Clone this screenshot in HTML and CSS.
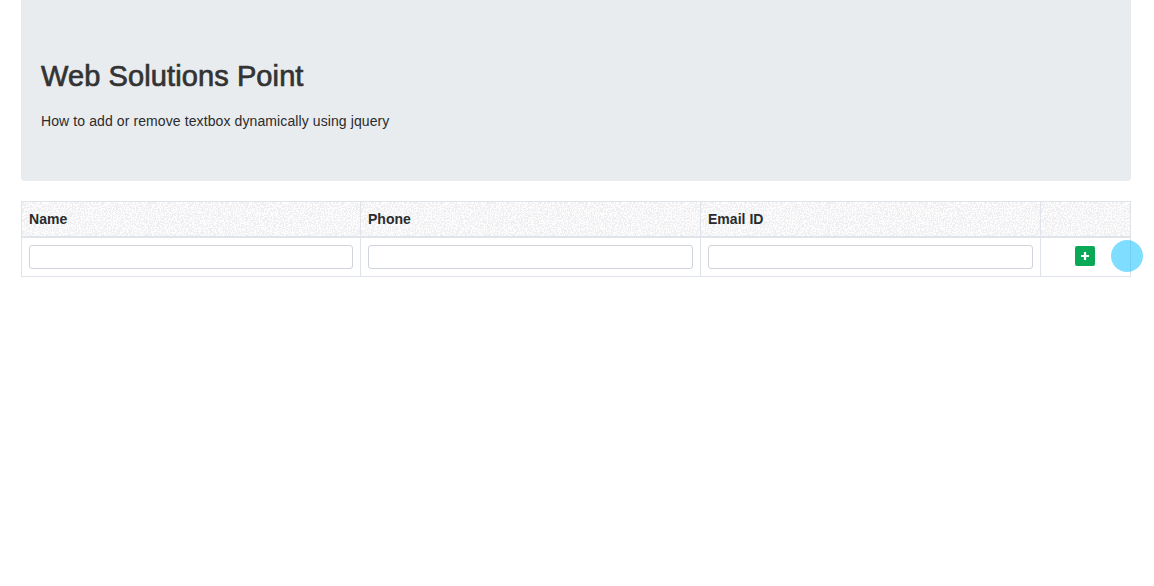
FILE: index.html
```html
<!DOCTYPE html>
<html lang="en">
<head>
<meta charset="utf-8">
<title>Web Solutions Point</title>
<link rel="stylesheet" href="styles.css">
</head>
<body>
<div class="container">
  <header class="jumbotron">
    <h1>Web Solutions Point</h1>
    <p>How to add or remove textbox dynamically using jquery</p>
  </header>
  <table class="grid">
    <colgroup>
      <col class="c1"><col class="c2"><col class="c3"><col class="c4">
    </colgroup>
    <thead>
      <tr><th>Name</th><th>Phone</th><th>Email ID</th><th></th></tr>
    </thead>
    <tbody>
      <tr>
        <td><input type="text" class="field"></td>
        <td><input type="text" class="field"></td>
        <td><input type="text" class="field"></td>
        <td class="action">
          <button type="button" class="add" aria-label="Add">
            <svg viewBox="0 0 10 10" width="10" height="10"><path d="M5 1v8M1 5h8" stroke="#fff" stroke-width="2.2" fill="none"/></svg>
          </button>
        </td>
      </tr>
    </tbody>
  </table>
  <span class="cursor"></span>
</div>
</body>
</html>
```
FILE: styles.css
```css
* { box-sizing: border-box; }
html, body { margin: 0; padding: 0; background: #fff; }
body {
  font-family: "Liberation Sans", Arial, sans-serif;
  font-size: 14px;
  color: #292b2c;
}
.container {
  position: relative;
  width: 1110px;
  margin-left: 21px;
}
.jumbotron {
  height: 181px;
  padding: 60px 20px 0;
  background: #e9ecef;
  border-radius: 0 0 4px 4px;
  margin-bottom: 20px;
}
.jumbotron h1 {
  margin: 0 0 18px;
  font-size: 29px;
  line-height: 33px;
  font-weight: 400;
  letter-spacing: 0.1px;
  -webkit-text-stroke: 0.7px #333;
  color: #333;
}
.jumbotron p {
  margin: 0;
  font-size: 14px;
  line-height: 21px;
  letter-spacing: 0.1px;
  color: #292b2c;
}
.grid {
  width: 1109px;
  table-layout: fixed;
  border-collapse: collapse;
}
.c1 { width: 339px; }
.c2 { width: 340px; }
.c3 { width: 340px; }
.c4 { width: 90px; }
.grid th, .grid td {
  border: 1px solid #dfe3ea;
  padding: 0 7px;
  text-align: left;
}
.grid th {
  height: 35px;
  font-size: 14px;
  font-weight: 700;
  letter-spacing: 0.03px;
  border-bottom-width: 2px;
  background-color: #fdfdfd;
  background-image: url("data:image/svg+xml,%3Csvg xmlns='http://www.w3.org/2000/svg' width='240' height='240'%3E%3Cfilter id='n' x='0' y='0' width='100%25' height='100%25' color-interpolation-filters='sRGB'%3E%3CfeTurbulence type='fractalNoise' baseFrequency='0.75' numOctaves='2' seed='3' stitchTiles='stitch'/%3E%3CfeColorMatrix values='0 0 0 0 0.94 0 0 0 0 0.943 0 0 0 0 0.95 6 0 0 0 -2.5'/%3E%3CfeComponentTransfer%3E%3CfeFuncA type='discrete' tableValues='0 1'/%3E%3C/feComponentTransfer%3E%3C/filter%3E%3Crect width='240' height='240' filter='url(%23n)'/%3E%3C/svg%3E");
}
.grid td {
  height: 40px;
  padding-top: 7px;
  vertical-align: top;
}
.field {
  display: block;
  width: 100%;
  height: 24px;
  padding: 0 6px;
  background: #fff;
  border: 1px solid #ced4da;
  border-radius: 3px;
  outline: none;
}
.add {
  display: flex;
  align-items: center;
  justify-content: center;
  width: 20px;
  height: 20px;
  margin: 1px 0 0 27px;
  padding: 0;
  background: #0aa957;
  border: 0;
  border-radius: 2px;
}
.cursor {
  position: absolute;
  left: 1090px;
  top: 240px;
  width: 32px;
  height: 32px;
  border-radius: 50%;
  background: rgba(0, 187, 255, 0.5);
}
```
